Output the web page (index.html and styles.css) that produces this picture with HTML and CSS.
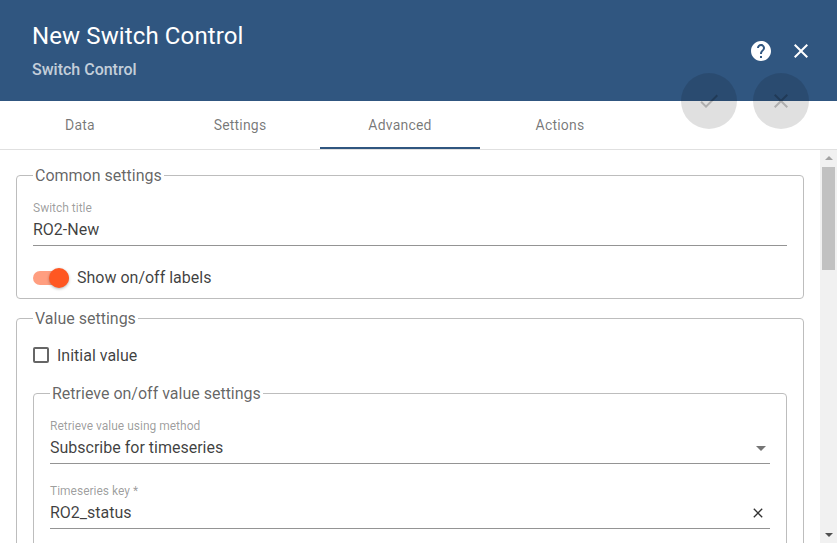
FILE: index.html
```html
<!DOCTYPE html>
<html lang="en">
<head>
    <meta charset="UTF-8">
    <meta name="viewport" content="width=device-width, initial-scale=1.0">
    <title>New Switch Control</title>
    <link rel="stylesheet" href="styles.css">
</head>
<body>
    <div class="dialog">
        <header class="dialog-header">
            <div class="heading">
                <h1>New Switch Control</h1>
                <div class="subtitle">Switch Control</div>
            </div>
            <div class="header-actions">
                <button class="icon-btn" aria-label="Help">
                    <svg width="24" height="24" viewBox="0 0 24 24"><path fill="#fff" d="M12 2C6.48 2 2 6.48 2 12s4.48 10 10 10 10-4.48 10-10S17.52 2 12 2zm1 17h-2v-2h2v2zm2.07-7.75l-.9.92C13.45 12.9 13 13.5 13 15h-2v-.5c0-1.1.45-2.1 1.17-2.83l1.24-1.26c.37-.36.59-.86.59-1.41 0-1.1-.9-2-2-2s-2 .9-2 2H8c0-2.21 1.79-4 4-4s4 1.79 4 4c0 .88-.36 1.68-.93 2.25z"/></svg>
                </button>
                <button class="icon-btn" aria-label="Close">
                    <svg width="24" height="24" viewBox="0 0 24 24"><path fill="#fff" d="M19 6.41L17.59 5 12 10.59 6.41 5 5 6.41 10.59 12 5 17.59 6.41 19 12 13.41 17.59 19 19 17.59 13.41 12z"/></svg>
                </button>
            </div>
        </header>

        <div class="fab-group">
            <button class="fab" aria-label="Apply">
                <svg width="24" height="24" viewBox="0 0 24 24"><path fill="#000" fill-opacity="0.22" d="M9 16.17L4.83 12l-1.42 1.41L9 19 21 7l-1.41-1.41z"/></svg>
            </button>
            <button class="fab" aria-label="Decline">
                <svg width="24" height="24" viewBox="0 0 24 24"><path fill="#000" fill-opacity="0.22" d="M19 6.41L17.59 5 12 10.59 6.41 5 5 6.41 10.59 12 5 17.59 6.41 19 12 13.41 17.59 19 19 17.59 13.41 12z"/></svg>
            </button>
        </div>

        <nav class="tabs">
            <div class="tab">Data</div>
            <div class="tab">Settings</div>
            <div class="tab active">Advanced</div>
            <div class="tab">Actions</div>
        </nav>

        <div class="body-row">
            <div class="content">
                <fieldset class="group">
                    <legend>Common settings</legend>
                    <div class="field">
                        <label>Switch title</label>
                        <div class="value">RO2-New</div>
                    </div>
                    <div class="toggle-row">
                        <span class="toggle"><span class="toggle-thumb"></span></span>
                        <span>Show on/off labels</span>
                    </div>
                </fieldset>

                <fieldset class="group">
                    <legend>Value settings</legend>
                    <div class="check-row">
                        <span class="checkbox"></span>
                        <span>Initial value</span>
                    </div>
                    <fieldset class="group inner">
                        <legend>Retrieve on/off value settings</legend>
                        <div class="field">
                            <label>Retrieve value using method</label>
                            <div class="value">
                                <span>Subscribe for timeseries</span>
                                <span class="select-arrow"></span>
                            </div>
                        </div>
                        <div class="field">
                            <label>Timeseries key *</label>
                            <div class="value">
                                <span>RO2_status</span>
                                <svg class="clear" width="16" height="16" viewBox="0 0 24 24"><path fill="#333" d="M19 6.41L17.59 5 12 10.59 6.41 5 5 6.41 10.59 12 5 17.59 6.41 19 12 13.41 17.59 19 19 17.59 13.41 12z"/></svg>
                            </div>
                        </div>
                        <div class="spacer"></div>
                    </fieldset>
                </fieldset>
            </div>
            <div class="scrollbar">
                <span class="arrow-up"></span>
                <div class="scroll-track"><div class="scroll-thumb"></div></div>
                <span class="arrow-down"></span>
            </div>
        </div>
    </div>
</body>
</html>
```

FILE: styles.css
```css
* {
    box-sizing: border-box;
}
html, body {
    height: 100%;
}
body {
    margin: 0;
    font-family: 'Roboto', sans-serif;
    font-size: 16px;
    color: rgba(0,0,0,0.76);
    background-color: #ffffff;
    overflow: hidden;
}
.dialog {
    position: relative;
    display: flex;
    flex-direction: column;
    height: 100%;
}
.dialog-header {
    flex: none;
    height: 101px;
    display: flex;
    justify-content: space-between;
    padding: 20px 24px 0 32px;
    background-color: #305680;
    color: white;
}
h1 {
    margin: 0;
    font-size: 24px;
    line-height: 32px;
    font-weight: 400;
    letter-spacing: 0.12px;
}
.subtitle {
    margin-top: 6px;
    font-size: 16px;
    line-height: 24px;
    font-weight: 500;
    color: rgba(255,255,255,0.72);
}
.header-actions {
    display: flex;
    gap: 16px;
    padding-top: 19px;
}
.icon-btn {
    width: 24px;
    height: 24px;
    padding: 0;
    border: none;
    background: none;
}
.fab-group {
    position: absolute;
    top: 73px;
    left: 681px;
    display: flex;
    gap: 16px;
}
.fab {
    display: flex;
    align-items: center;
    justify-content: center;
    width: 56px;
    height: 56px;
    padding: 0;
    border: none;
    border-radius: 50%;
    background-color: rgba(0,0,0,0.12);
}
.tabs {
    flex: none;
    display: flex;
    height: 49px;
    border-bottom: 1px solid #e0e0e0;
}
.tab {
    width: 160px;
    height: 48px;
    line-height: 48px;
    text-align: center;
    font-size: 14px;
    font-weight: 400;
    letter-spacing: 0.2px;
    color: rgba(0,0,0,0.54);
}
.tab.active {
    border-bottom: 2px solid #305680;
}
.body-row {
    flex: 1;
    min-height: 0;
    display: flex;
}
.content {
    flex: 1;
    min-width: 0;
    overflow: hidden;
    padding: 16px;
}
.scrollbar {
    flex: none;
    width: 17px;
    display: flex;
    flex-direction: column;
    align-items: center;
    background-color: #f1f1f1;
}
.arrow-up, .arrow-down {
    flex: none;
    width: 0;
    height: 0;
    border-left: 4px solid transparent;
    border-right: 4px solid transparent;
}
.arrow-up {
    margin-top: 6px;
    margin-bottom: 7px;
    border-bottom: 4px solid #a3a3a3;
}
.arrow-down {
    margin-top: 7px;
    margin-bottom: 6px;
    border-top: 4px solid #505050;
}
.scroll-track {
    flex: 1;
    align-self: stretch;
    padding: 0 2px;
}
.scroll-thumb {
    height: 103px;
    background-color: #c1c1c1;
}
.group {
    margin: 0 0 10px;
    padding: 15px 16px 0;
    border: 1px solid #bdbdbd;
    border-radius: 4px;
    min-width: 0;
}
.group legend {
    padding: 0 2px;
    margin-left: 0;
    font-size: 16px;
    line-height: 19px;
    color: rgba(0,0,0,0.62);
}
.field label {
    display: block;
    padding-top: 1px;
    font-size: 12px;
    line-height: 14px;
    color: rgba(0,0,0,0.4);
}
.value {
    display: flex;
    align-items: center;
    justify-content: space-between;
    height: 31px;
    border-bottom: 1px solid #949494;
    line-height: 24px;
}
.toggle-row {
    display: flex;
    align-items: center;
    gap: 8px;
    height: 24px;
    margin-top: 19px;
    margin-bottom: 9px;
}
.toggle {
    position: relative;
    display: block;
    width: 36px;
    height: 14px;
    margin-top: 2px;
    border-radius: 7px;
    background-color: #ff9e80;
}
.toggle-thumb {
    position: absolute;
    top: -3px;
    right: 0;
    width: 20px;
    height: 20px;
    border-radius: 50%;
    background-color: #ff5722;
    box-shadow: 0 1px 3px rgba(0,0,0,0.3);
}
.check-row {
    display: flex;
    align-items: center;
    gap: 8px;
    height: 24px;
    margin-bottom: 17px;
}
.checkbox {
    width: 16px;
    height: 16px;
    border: 2px solid #666;
    border-radius: 2px;
}
.select-arrow {
    width: 0;
    height: 0;
    margin-right: 4px;
    border-left: 5px solid transparent;
    border-right: 5px solid transparent;
    border-top: 5px solid #757575;
}
.clear {
    margin-right: 4px;
}
.inner .field {
    margin-bottom: 19px;
}
.spacer {
    height: 800px;
}
```
